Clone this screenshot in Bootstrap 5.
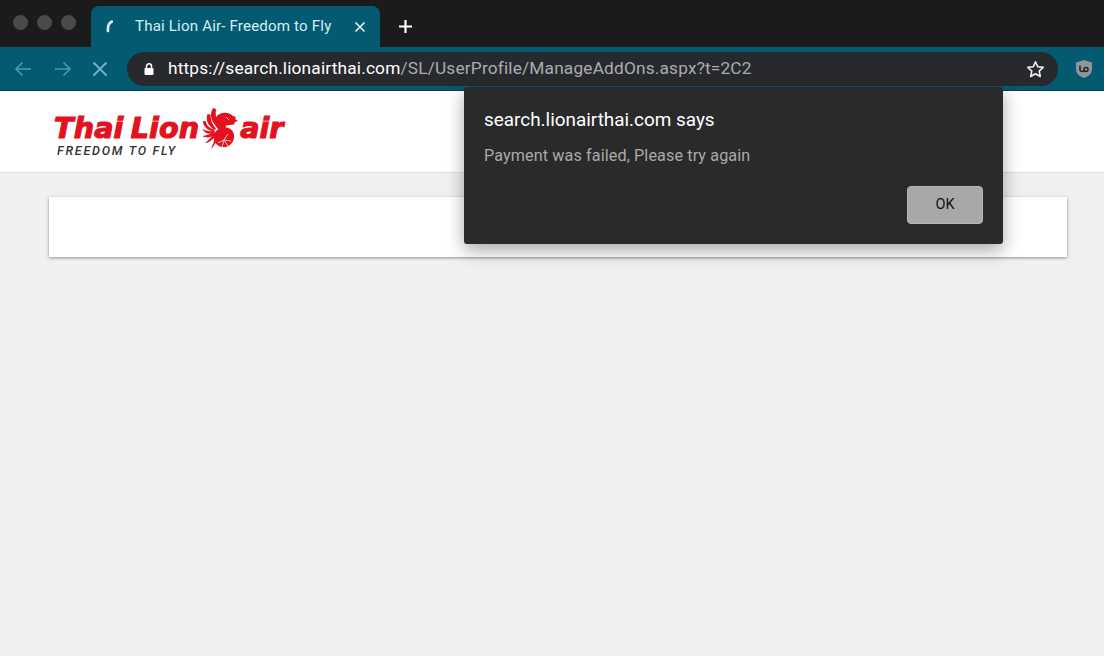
<!DOCTYPE html>
<html lang="en">
<head>
  <meta charset="UTF-8" />
  <meta name="viewport" content="width=device-width, initial-scale=1" />
  <title>Thai Lion Air- Freedom to Fly</title>
  <link href="https://cdn.jsdelivr.net/npm/bootstrap@5.3.3/dist/css/bootstrap.min.css" rel="stylesheet">
  <style>
    html, body { height: 100%; overflow: hidden; }
    body { font-family: "Roboto", "Liberation Sans", sans-serif; background: #f0f0f0; }

    .tab-strip { height: 47px; background: #1b1b1c; }
    .traffic-lights { width: 91px; padding-left: 13px; padding-top: 15px; gap: 9px; }
    .traffic-dot { width: 15px; height: 15px; border-radius: 50%; background: #4a4a4b; }
    .page-tab { width: 289px; height: 41px; margin-top: 6px; background: #045a70; border-radius: 8px 8px 0 0; color: #d5eef4; font-size: 15.1px; padding: 0 14px 0 14px; }
    .tab-title { margin-left: 22px; letter-spacing: .17px; white-space: nowrap; }
    .new-tab { margin-left: 18px; margin-top: 6px; }

    .tool-bar { height: 44px; background: #045a70; border-bottom: 1px solid #04404f; padding: 4px 0 4px 14px; }
    .nav-btns { gap: 20px; width: 113px; }
    .omni-box { width: 931px; height: 34px; background: #27292c; border-radius: 17px; padding: 0 13px 0 16px; font-size: 17.3px; color: #a9adb1; white-space: nowrap; }
    .omni-url { margin-left: 13px; letter-spacing: .17px; }
    .omni-host { color: #fff; }
    .shield-btn { margin-left: 17px; }

    .site-head { height: 82px; background: #fff; border-bottom: 1px solid #dedede; padding: 17px 0 0 54px; }
    .brand-line { font-family: "DejaVu Sans", sans-serif; font-weight: 700; font-style: italic; color: #e2131f; font-size: 28.5px; line-height: 30px; -webkit-text-stroke: 1.2px #e2131f; white-space: nowrap; }
    .brand-gap { letter-spacing: .2px; word-spacing: -3px; }
    .brand-tag { font-family: "Roboto", sans-serif; font-style: italic; font-weight: 500; font-size: 12.5px; letter-spacing: 1.75px; color: #333; line-height: 12px; margin: -5px 0 0 3px; }
    .lion-mark { margin: 0 2px 0 3px; }

    .blank-panel { height: 60px; margin: 24px 37px 0 49px; background: #fff; box-shadow: 0 1px 3px rgba(0,0,0,.4); }

    .alert-box { position: absolute; left: 464px; top: 87px; width: 539px; height: 157px; background: #2a2a2a; border-radius: 3px; box-shadow: 0 6px 18px rgba(0,0,0,.35); padding: 21px 20px 0; }
    .alert-head { color: #fff; font-size: 18.9px; line-height: 24px; }
    .alert-msg { color: #a9a9a9; font-size: 16.2px; line-height: 22px; margin-top: 13px; letter-spacing: .1px; }
    .ok-btn { width: 76px; height: 38px; margin-top: 19px; padding: 0 0 0 0; background: #a8a8a8; border: 1px solid #b5b5b5; border-radius: 4px; color: #111; font-size: 14.5px; }
  </style>
</head>
<body>
  <div class="tab-strip d-flex">
    <div class="traffic-lights d-flex">
      <span class="traffic-dot"></span><span class="traffic-dot"></span><span class="traffic-dot"></span>
    </div>
    <div class="page-tab d-flex align-items-center">
      <svg width="8" height="14" viewBox="0 0 8 14"><path d="M7 1.500C3.500 3 2.500 6 3 11" fill="none" stroke="#d5eef4" stroke-width="2.600" stroke-linecap="round"/></svg>
      <span class="tab-title flex-grow-1">Thai Lion Air- Freedom to Fly</span>
      <svg width="12" height="12" viewBox="0 0 12 12"><path d="M1.500 1.500l9 9M10.500 1.500l-9 9" stroke="#e6f4f7" stroke-width="1.600"/></svg>
    </div>
    <div class="new-tab d-flex align-items-center">
      <svg width="15" height="15" viewBox="0 0 15 15"><path d="M7.500 1v13M1 7.500h13" stroke="#fff" stroke-width="2.200"/></svg>
    </div>
  </div>

  <div class="tool-bar d-flex align-items-center">
    <div class="nav-btns d-flex align-items-center">
      <svg width="19" height="16" viewBox="0 0 19 16"><path d="M17 8H2M8.500 1.500L2 8l6.500 6.500" fill="none" stroke="#4f97a9" stroke-width="1.700"/></svg>
      <svg width="19" height="16" viewBox="0 0 19 16"><path d="M2 8h15M10.500 1.500L17 8l-6.500 6.500" fill="none" stroke="#4f97a9" stroke-width="1.700"/></svg>
      <svg width="16" height="16" viewBox="0 0 16 16"><path d="M1.500 1.500l13 13M14.500 1.500l-13 13" stroke="#74b3c2" stroke-width="1.800"/></svg>
    </div>
    <div class="omni-box d-flex align-items-center">
      <svg width="12" height="14" viewBox="0 0 12 14"><path d="M3.500 6V4.200a2.500 2.500 0 0 1 5 0V6" fill="none" stroke="#fff" stroke-width="1.500"/><rect x="1.500" y="6" width="9" height="7" rx="1" fill="#fff"/></svg>
      <span class="omni-url flex-grow-1"><span class="omni-host">https://search.lionairthai.com</span>/SL/UserProfile/ManageAddOns.aspx?t=2C2</span>
      <svg width="19" height="18" viewBox="0 0 19 18"><path d="M9.500 1.800l2.300 5 5.400.6-4 3.700 1.100 5.400-4.800-2.700-4.800 2.700 1.100-5.400-4-3.700 5.400-.6z" fill="none" stroke="#f0f0f0" stroke-width="1.600" stroke-linejoin="round"/></svg>
    </div>
    <div class="shield-btn d-flex">
      <svg width="18" height="20" viewBox="0 0 18 20"><path d="M9 1l8 2.600V10c0 4.500-3.500 7.500-8 9-4.500-1.500-8-4.500-8-9V3.600z" fill="#8f9699"/><path d="M5 6.500v4a2 2 0 0 0 4 0 2 2 0 1 1 4 0 2 2 0 0 1-4 0" fill="none" stroke="#26292b" stroke-width="1.600"/></svg>
    </div>
  </div>

  <div class="site-head">
    <div class="d-flex align-items-center">
      <span class="brand-line brand-gap">Thai Lion</span>
      <svg class="lion-mark" width="36" height="42" viewBox="0 0 36 42">
        <g fill="#e2131f">
          <path d="M11 0c-3.500 6-2.500 12 3 18l3 2c-2.500-7-4-13-3-19z"/>
          <path d="M5.500 6c-2 6 0 11 6.500 15.500l2.500 0c-4-4.500-6-9-6-15z"/>
          <path d="M1 13c0 5 4 9.500 11.500 11l0-2.500c-5-1-8-4-9-8.500z"/>
          <path d="M0 20.500c2 4.500 6 6 12.500 5l0-2.500c-5 .5-9.500 0-12.500-2.500z"/>
          <path d="M0.500 28c4 2.500 8.500 1.500 13-1.500l-1-2.500c-4 2-8.500 3.500-12 4z"/>
          <path d="M3 35c4.500-.5 8-3.500 11-7.500l-1.500-2c-3 3.500-6.500 7-9.500 9.500z"/>
          <path d="M9 40.500c3.500-2 5-6.500 6.500-12l-2-1.500c-1 5-2.500 10-4.500 13.500z"/>
          <path d="M13 12c1-5 6-8 12-7 3 .5 5 2 6 3l3 1-1 2 3 2-3 1-1 2.500-5 .5c-3 0-4 1-3 2.500 5 .5 9 4.500 8 10.500-1 6-6 10-12 9-6-1-9-6-8-11.500.5-3 2-5 4.500-6.500-3-2-4.500-5-3.500-9.500z"/>
        </g>
        <g stroke="#fff" stroke-width=".7" fill="none">
          <path d="M22 32l-6 3M22 32l-2 7M22 32l4 6M22 32l7 1M22 32l4-6"/>
          <path d="M24 9l3 3"/>
        </g>
      </svg>
      <span class="brand-line">air</span>
    </div>
    <div class="brand-tag">FREEDOM TO FLY</div>
  </div>

  <div class="blank-panel"></div>

  <div class="alert-box">
    <div class="alert-head">search.lionairthai.com says</div>
    <div class="alert-msg">Payment was failed, Please try again</div>
    <div class="d-flex justify-content-end">
      <button type="button" class="btn ok-btn">OK</button>
    </div>
  </div>

  <script src="https://cdn.jsdelivr.net/npm/bootstrap@5.3.3/dist/js/bootstrap.bundle.min.js"></script>
</body>
</html>
